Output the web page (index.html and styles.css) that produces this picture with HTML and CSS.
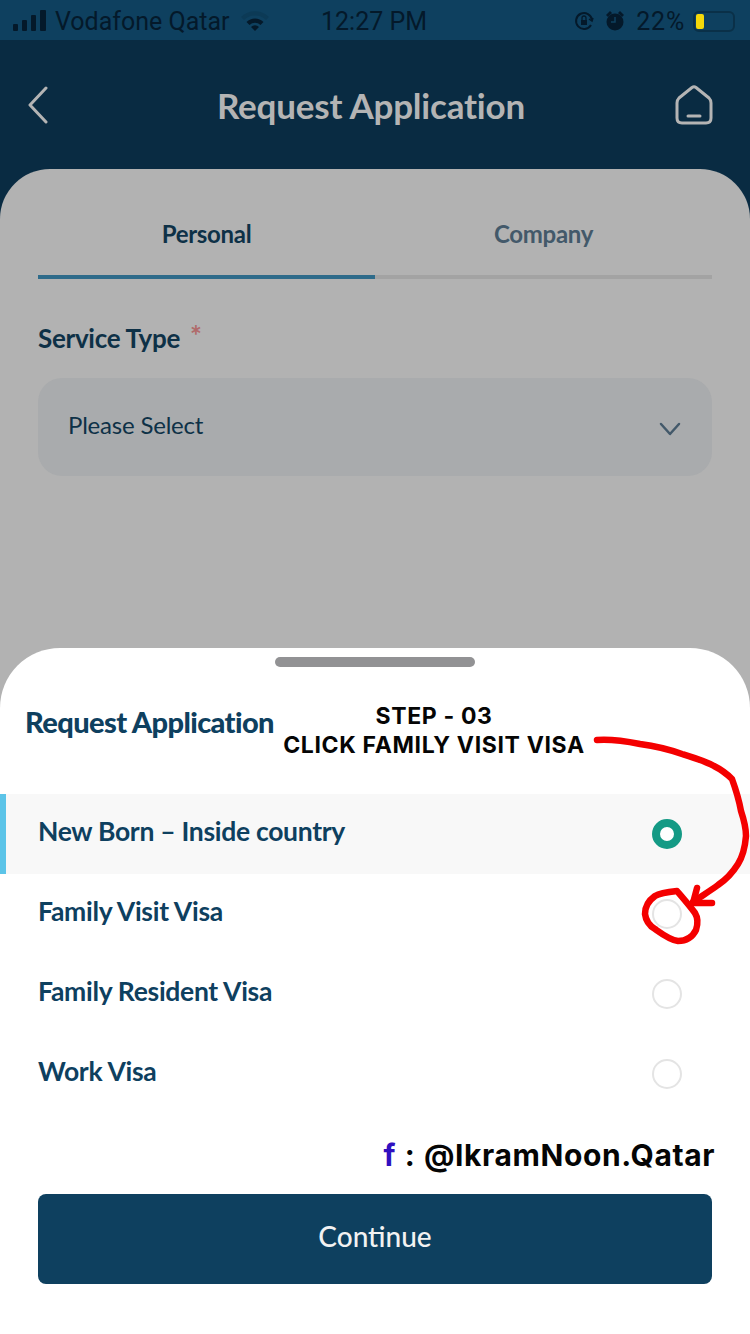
FILE: index.html
```html
<!DOCTYPE html>
<html lang="en">
<head>
<meta charset="utf-8">
<title>Request Application</title>
<link rel="stylesheet" href="styles.css">
</head>
<body>
<div class="screen">
  <div class="status">
    <div class="status-left">
      <svg class="signal" width="34" height="22" viewBox="0 0 34 22"><rect x="0" y="14" width="5" height="7" rx="1"/><rect x="9" y="10" width="5" height="11" rx="1"/><rect x="18" y="5" width="5" height="16" rx="1"/><rect x="27" y="0" width="6" height="21" rx="1"/></svg>
      <span class="carrier">Vodafone Qatar</span>
      <svg class="wifi" width="30" height="22" viewBox="0 0 30 22"><path d="M1 7a20 20 0 0 1 28 0l-3 3a16 16 0 0 0-22 0z" fill="#0c3a56"/><path d="M6.500 12a12 12 0 0 1 17 0l-3 3a8 8 0 0 0-11 0z"/><path d="M11 17a5.500 5.500 0 0 1 8 0l-4 4z"/></svg>
    </div>
    <span class="time">12:27 PM</span>
    <div class="status-right">
      <svg class="status-icon" width="20" height="22" viewBox="0 0 20 22" fill="none" stroke="#04192a" stroke-width="2"><path d="M17 15a8 8 0 1 1 1-5"/><path d="M19 8l-1 3-3-2" stroke-width="1.500"/><rect x="7" y="10" width="6" height="5" fill="#04192a" stroke="none"/><path d="M8 10V8a2 2 0 0 1 4 0v2" stroke-width="1.300"/></svg>
      <svg class="status-icon" width="20" height="22" viewBox="0 0 20 22"><circle cx="10" cy="12" r="8.500" fill="#04192a"/><path d="M1 5l4-4 2 2-4 4zM19 5l-4-4-2 2 4 4z" fill="#04192a"/><path d="M10 7v5H6" fill="none" stroke="#0e405f" stroke-width="1.500"/></svg>
      <span class="pct">22%</span>
      <div class="battery"><span class="battery-fill"></span></div>
    </div>
  </div>

  <header class="nav">
    <svg class="nav-icon" width="22" height="38" viewBox="0 0 22 38" fill="none" stroke="#b4b4b4" stroke-width="3" stroke-linecap="round" stroke-linejoin="round"><path d="M19 2L3 19l16 17"/></svg>
    <h1 class="nav-title">Request Application</h1>
    <svg class="nav-icon" width="38" height="40" viewBox="0 0 38 40" fill="none" stroke="#b4b4b4" stroke-width="3" stroke-linecap="round" stroke-linejoin="round"><path d="M2 18Q2 15 4 13L17 2.500Q19 1 21 2.500L34 13Q36 15 36 18V33Q36 38 31 38H7Q2 38 2 33Z"/><path d="M13 31h12"/></svg>
  </header>

  <main class="panel">
    <div class="tabs">
      <div class="tab tab-active">Personal</div>
      <div class="tab">Company</div>
    </div>
    <div class="field-label">Service Type <span class="star">*</span></div>
    <div class="select">
      <span>Please Select</span>
      <svg width="22" height="14" viewBox="0 0 22 14" fill="none" stroke="#43596a" stroke-width="2.500" stroke-linecap="round" stroke-linejoin="round"><path d="M2 2l9 10 9-10"/></svg>
    </div>
  </main>

  <section class="sheet">
    <div class="handle"></div>
    <h2 class="sheet-title">Request Application</h2>
    <ul class="options">
      <li class="option option-selected"><span>New Born – Inside country</span><i class="radio radio-on"></i></li>
      <li class="option"><span>Family Visit Visa</span><i class="radio"></i></li>
      <li class="option"><span>Family Resident Visa</span><i class="radio"></i></li>
      <li class="option"><span>Work Visa</span><i class="radio"></i></li>
    </ul>
    <div class="credit"><b class="credit-f">f</b> : @IkramNoon.Qatar</div>
    <button class="continue">Continue</button>
  </section>

  <div class="step"><div>STEP - 03</div><div>CLICK FAMILY VISIT VISA</div></div>
  <svg class="scribble" width="750" height="1334" viewBox="0 0 750 1334" fill="none" stroke="#f40000" stroke-width="6.500" stroke-linecap="round" stroke-linejoin="round">
    <path d="M597 740C610 739 625 741 640 744C655 746 668 749 682 754C695 758 705 761 714 766C722 770 727 774 732 779C736 790 739 800 741 811C744 820 746 828 746 836C745 848 743 856 738 864C733 872 727 879 718 885C710 891 700 897 693 902"/>
    <path d="M697 888L693 903L712 903"/>
    <path d="M677 891C668 892 660 893 655 896C648 901 645 908 645 914C646 922 650 926 655 929C662 934 670 940 678 941C687 941 693 936 696 930C698 924 698 918 695 913C690 906 683 898 677 891Z"/>
  </svg>
</div>
</body>
</html>
```
FILE: styles.css
```css
* { box-sizing: border-box; }
html, body { margin: 0; padding: 0; }
body { font-family: Lato, "Liberation Sans", sans-serif; background: #fff; }
.screen { position: relative; width: 750px; height: 1334px; overflow: hidden; background: #092b42; display: flex; flex-direction: column; }

.status { height: 40px; background: #0e405f; display: flex; align-items: center; color: #04192a; font-family: Roboto, "Liberation Sans", sans-serif; font-size: 25px; padding: 2px 15px 0 13px; flex: none; }
.status svg { display: block; }
.signal, .wifi { fill: #04192a; }
.status-left { display: flex; align-items: center; gap: 8px; width: 308px; }
.wifi { margin-left: 2px; }
.carrier { white-space: nowrap; }
.time { white-space: nowrap; }
.status-right { margin-left: auto; display: flex; align-items: center; gap: 11px; }
.pct { letter-spacing: 0.8px; }
.battery { width: 42px; height: 21px; border: 2px solid #0a3048; border-radius: 6px; padding: 1px; margin-left: -3px; }
.battery-fill { display: block; width: 8px; height: 15px; background: #f5d90a; border-radius: 2px; }

.nav { height: 129px; flex: none; display: flex; align-items: center; padding: 0 37px 0 27px; }
.nav-icon { display: block; flex: none; }
.nav-title { flex: 1; margin: 0; padding-left: 18px; text-align: center; font-size: 35px; font-weight: 700; color: #b4b4b4; letter-spacing: -0.2px; }

.panel { flex: 1; background: #b2b2b2; border-radius: 50px 50px 0 0; padding: 40px 38px 0; color: #0e3147; }
.tabs { display: flex; }
.tab { flex: 1; height: 70px; padding-top: 10px; text-align: center; font-size: 24px; font-weight: 700; color: #43596a; border-bottom: 4px solid #a3a3a3; letter-spacing: -0.3px; }
.tab-active { color: #0e3147; border-bottom-color: #2e6b8a; }
.field-label { margin-top: 41px; font-size: 26px; font-weight: 700; letter-spacing: -0.3px; line-height: 36px; }
.star { color: #b06a6a; font-size: 28px; line-height: 20px; vertical-align: 2px; margin-left: 4px; }
.select { margin-top: 22px; height: 98px; background: #a9abad; border-radius: 24px; display: flex; align-items: center; justify-content: space-between; padding: 0 31px 0 30px; font-size: 24px; font-weight: 400; letter-spacing: -0.2px; }
.select span { position: relative; top: -3px; }
.select svg { display: block; margin-top: 4px; }

.sheet { position: absolute; left: 0; right: 0; bottom: 0; height: 686px; background: #fff; border-radius: 60px 60px 0 0; display: flex; flex-direction: column; }
.handle { width: 200px; height: 10px; border-radius: 5px; background: #929294; margin: 9px auto 0; flex: none; }
.sheet-title { margin: 37px 0 0 25px; font-size: 29px; line-height: 36px; font-weight: 900; color: #0e405f; letter-spacing: -0.6px; }
.options { list-style: none; margin: 54px 0 0; padding: 0; }
.option { height: 80px; display: flex; align-items: center; justify-content: space-between; padding: 0 68px 0 38px; font-size: 26.500px; font-weight: 700; color: #0e405f; letter-spacing: -0.3px; }
.option span { position: relative; top: -3px; }
.option-selected { background: #f8f8f8; box-shadow: inset 6px 0 0 #5cc4e8; }
.radio { display: block; width: 30px; height: 30px; border-radius: 50%; border: 2px solid #e4e4e4; background: #fff; }
.radio-on { border: 8px solid #149a85; }
.credit { margin: 21px 35px 0 0; text-align: right; font-family: Inter, "Open Sans", sans-serif; font-size: 30px; line-height: 40px; font-weight: 700; color: #050505; letter-spacing: 0.6px; word-spacing: 1px; }
.credit-f { color: #3010c0; font-weight: 700; }
.continue { margin: 19px 38px 0; height: 90px; flex: none; padding: 0 0 6px; background: #0e405f; border: 0; border-radius: 8px; color: #f2f2f2; font-family: inherit; font-size: 28px; font-weight: 500; }

.step { position: absolute; left: 234px; top: 702px; width: 400px; text-align: center; font-family: Inter, "Open Sans", sans-serif; font-size: 23px; line-height: 29px; font-weight: 700; color: #050505; letter-spacing: 0.65px; }
.scribble { position: absolute; left: 0; top: 0; pointer-events: none; }
```
